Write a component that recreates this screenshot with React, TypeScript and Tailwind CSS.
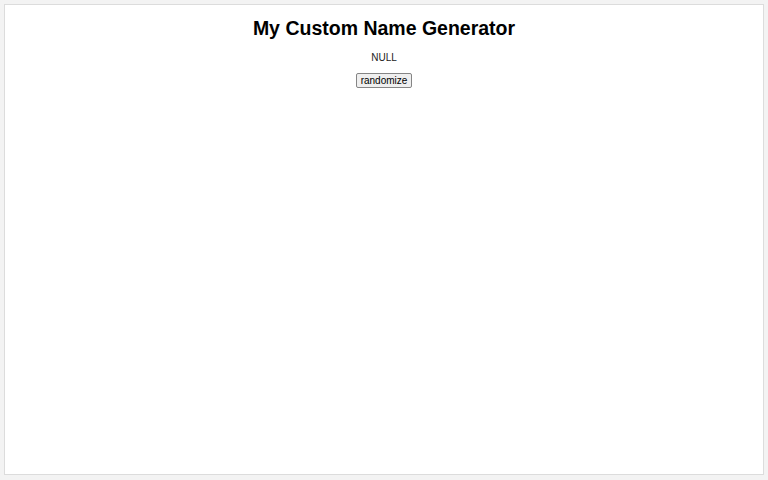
export default function App() {
  return (
    <div className="h-[480px] w-[768px] bg-[#f3f3f3] p-[4px] font-['Liberation_Sans',Arial,sans-serif]">
      <div className="flex h-[471px] flex-col items-center border border-[#dcdcdc] bg-white">
        <h1 className="mt-[12px] text-[19.5px] font-bold leading-[22px] text-black">
          My Custom Name Generator
        </h1>
        <p className="mt-[13px] text-[10px] leading-[12px] text-[#222]">NULL</p>
        <button className="mt-[9px] rounded-[2px] border border-[#858585] bg-[#efefef] px-[4px] py-[1px] text-[10px] leading-[11px] text-black">
          randomize
        </button>
      </div>
    </div>
  );
}
